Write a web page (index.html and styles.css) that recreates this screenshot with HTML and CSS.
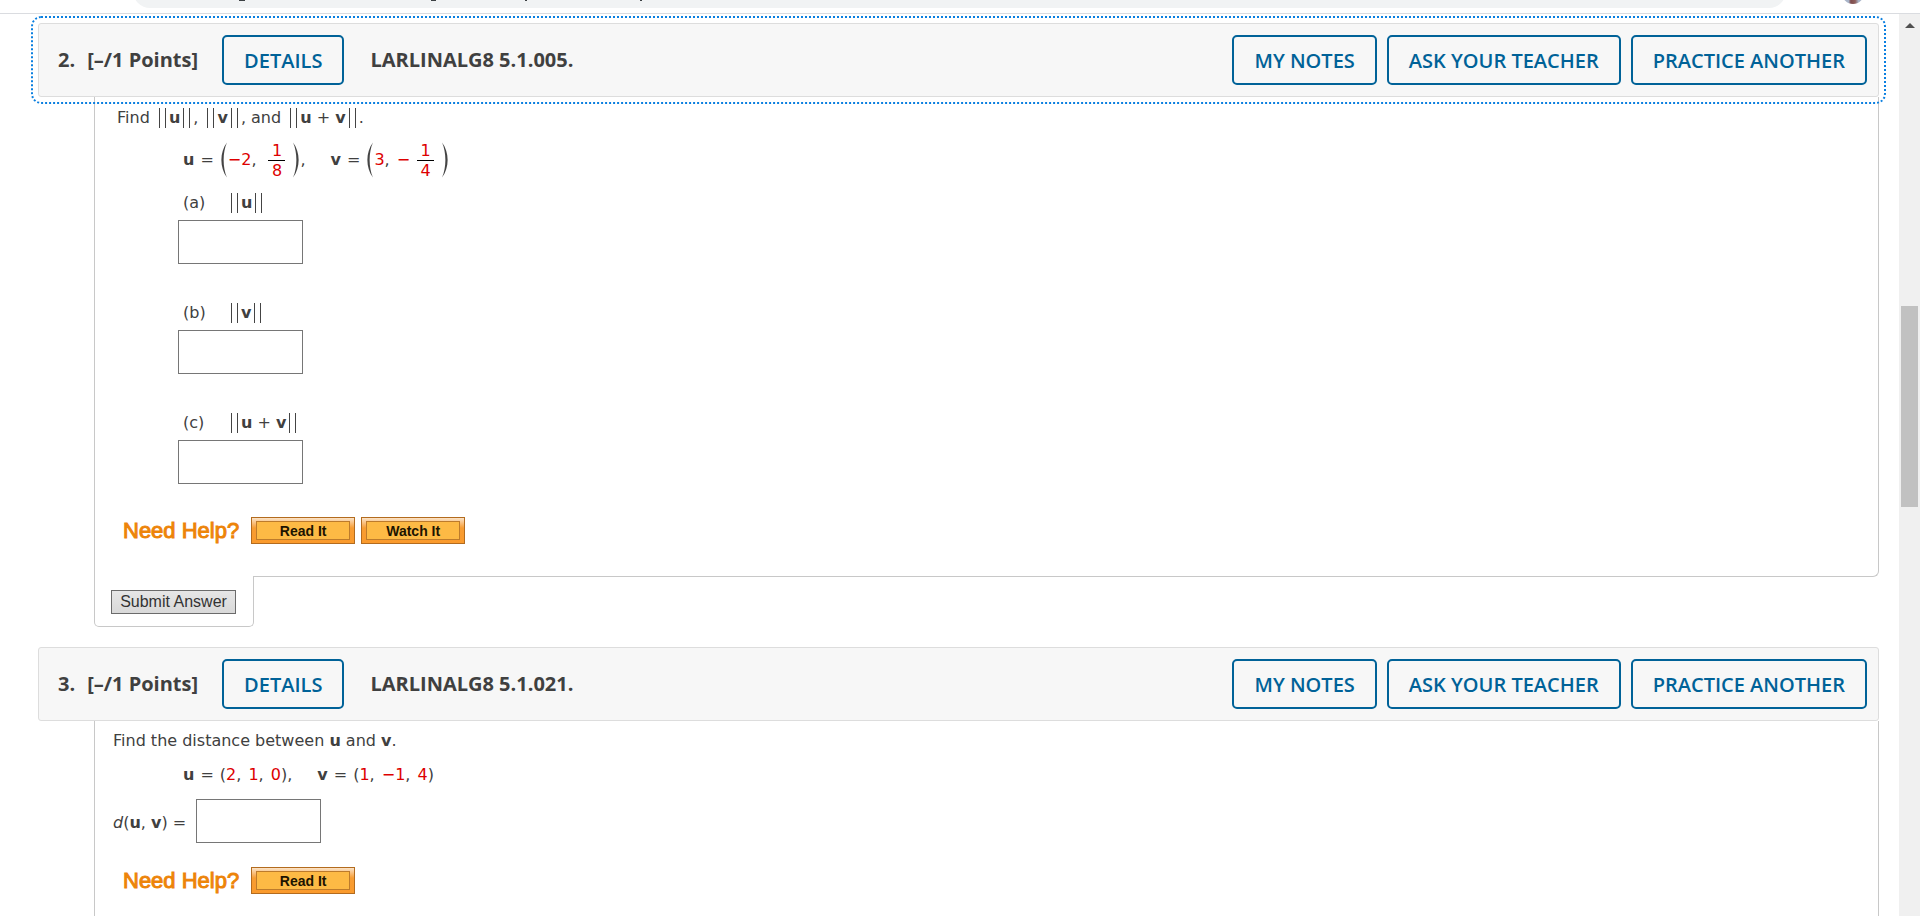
FILE: index.html
```html
<!DOCTYPE html>
<html lang="en">
<head>
  <meta charset="UTF-8" />
  <meta name="viewport" content="width=device-width, initial-scale=1" />
  <title>Assignment - Section 5.1</title>
  <link rel="stylesheet" href="styles.css">
</head>
<body>
  <div class="browser-bar">
    <div class="address">
      <svg class="marks" viewBox="0 0 520 1"><path d="M106 0h6v1h-6zM298 0h5v1h-5zM392 0h2v1h-2zM507 0h2v1h-2z" /></svg>
    </div>
    <div class="avatar"></div>
  </div>

  <div class="viewport">
    <main>
      <section class="question">
        <header class="question-header focused">
          <h2><span class="number">2.</span> <span class="points">[–/1 Points]</span></h2>
          <button class="btn details">DETAILS</button>
          <strong class="code">LARLINALG8 5.1.005.</strong>
          <div class="actions">
            <button class="btn">MY NOTES</button>
            <button class="btn">ASK YOUR TEACHER</button>
            <button class="btn">PRACTICE ANOTHER</button>
          </div>
        </header>

        <div class="question-body">
          <p class="prompt norms">Find <span class="norm"><b>u</b></span>, <span class="norm"><b>v</b></span>, and <span class="norm"><b>u</b> + <b>v</b></span>.</p>

          <div class="vectors tall">
            <b>u</b><span class="eq">=</span>
            <svg class="paren" viewBox="0 0 8 36"><path d="M7 0.5C-0.5 10 -0.5 26 7 35.5C2.5 26 2.5 10 7 0.5Z" /></svg>
            <span class="red">−2</span><span class="comma">,</span>
            <span class="fraction"><span>1</span><span>8</span></span>
            <svg class="paren" viewBox="0 0 8 36"><path d="M1 0.5C8.5 10 8.5 26 1 35.5C5.5 26 5.5 10 1 0.5Z" /></svg>
            <span class="separator">,</span>
            <b>v</b><span class="eq">=</span>
            <svg class="paren" viewBox="0 0 8 36"><path d="M7 0.5C-0.5 10 -0.5 26 7 35.5C2.5 26 2.5 10 7 0.5Z" /></svg>
            <span class="red">3</span><span class="comma">,</span>
            <span class="red minus">−</span>
            <span class="fraction"><span>1</span><span>4</span></span>
            <svg class="paren" viewBox="0 0 8 36"><path d="M1 0.5C8.5 10 8.5 26 1 35.5C5.5 26 5.5 10 1 0.5Z" /></svg>
          </div>

          <div class="part">
            <label for="part-a"><span class="letter">(a)</span><span class="norm"><b>u</b></span></label>
            <input type="text" class="answer" id="part-a">
          </div>
          <div class="part">
            <label for="part-b"><span class="letter">(b)</span><span class="norm"><b>v</b></span></label>
            <input type="text" class="answer" id="part-b">
          </div>
          <div class="part">
            <label for="part-c"><span class="letter">(c)</span><span class="norm"><b>u</b> + <b>v</b></span></label>
            <input type="text" class="answer" id="part-c">
          </div>

          <div class="help">
            <span class="help-title">Need Help?</span>
            <button class="help-btn"><span>Read It</span></button>
            <button class="help-btn"><span>Watch It</span></button>
          </div>
        </div>

        <div class="submit-tab">
          <button class="submit">Submit Answer</button>
        </div>
      </section>

      <section class="question">
        <header class="question-header">
          <h2><span class="number">3.</span> <span class="points">[–/1 Points]</span></h2>
          <button class="btn details">DETAILS</button>
          <strong class="code">LARLINALG8 5.1.021.</strong>
          <div class="actions">
            <button class="btn">MY NOTES</button>
            <button class="btn">ASK YOUR TEACHER</button>
            <button class="btn">PRACTICE ANOTHER</button>
          </div>
        </header>

        <div class="question-body">
          <p class="prompt">Find the distance between <b>u</b> and <b>v</b>.</p>
          <div class="vectors">
            <b>u</b><span class="eq">=</span>
            <span class="tuple">(<span class="red">2</span>, <span class="red">1</span>, <span class="red">0</span>)</span>
            <span class="separator">,</span>
            <b>v</b><span class="eq">=</span>
            <span class="tuple">(<span class="red">1</span>, <span class="red">−1</span>, <span class="red">4</span>)</span>
          </div>
          <div class="distance">
            <label for="distance"><i>d</i>(<b>u</b>, <b>v</b>) =</label>
            <input type="text" class="answer" id="distance">
          </div>
          <div class="help">
            <span class="help-title">Need Help?</span>
            <button class="help-btn"><span>Read It</span></button>
          </div>
        </div>
      </section>
    </main>

    <div class="scrollbar">
      <svg class="arrow" viewBox="0 0 10 5"><path d="M5 0L10 5H0Z" /></svg>
      <div class="thumb"></div>
    </div>
  </div>
</body>
</html>
```
FILE: styles.css
```css
* {
  box-sizing: border-box;
}

body {
  margin: 0;
  height: 100vh;
  display: flex;
  flex-direction: column;
  overflow: hidden;
  background: #fff;
  color: #404040;
  font-family: Verdana, "DejaVu Sans", sans-serif;
  font-size: 16px;
  line-height: 20px;
}

.browser-bar {
  flex: none;
  display: flex;
  align-items: flex-start;
  height: 14px;
  padding: 0 56px 0 133px;
  border-bottom: 1px solid #dadce0;
  overflow: hidden;
}

.address {
  flex: 1;
  height: 34px;
  margin-top: -26px;
  margin-right: 56px;
  background: #f1f3f4;
  border-radius: 17px;
}

.marks {
  display: block;
  width: 520px;
  height: 1px;
  margin-top: 26px;
  fill: #3c4043;
}

.avatar {
  width: 22px;
  height: 22px;
  margin-top: -18px;
  background: linear-gradient(90deg, #a9b4c8 30%, #7d4b4c 40%, #8d5f5c 60%, #a9b4c8 75%);
  border-radius: 50%;
}

.viewport {
  flex: 1;
  min-height: 0;
  display: flex;
}

main {
  flex: 1;
  padding: 9px 20px 0 38px;
  overflow: hidden;
}

.question {
  margin-bottom: 20px;
}

/* header */
.question-header {
  display: flex;
  align-items: center;
  height: 74px;
  padding: 0 11px 0 19px;
  background: #f7f7f7;
  border: 1px solid #ddd;
  border-radius: 3px;
  font-family: "Open Sans", sans-serif;
  font-size: 20px;
}

.question-header.focused {
  outline: 2px dotted #0a7fe0;
  outline-offset: 5px;
}

.question-header h2 {
  display: flex;
  gap: 12px;
  margin: 0;
  font-size: 20px;
  font-weight: 700;
}

.btn {
  height: 50px;
  padding: 0 20px;
  background: transparent;
  border: 2px solid #006298;
  border-radius: 5px;
  color: #006298;
  font-family: inherit;
  font-size: 20px;
  font-weight: 600;
  cursor: pointer;
}

.details {
  margin: 0 26px 0 24px;
}

.code {
  font-weight: 700;
}

.actions {
  display: flex;
  gap: 10px;
  margin-left: auto;
}

/* body */
.question-body {
  margin-left: 56px;
  padding: 10px 18px 32px;
  border: 1px solid #c8c8c8;
  border-top: none;
  border-radius: 0 0 6px 0;
}

.prompt {
  margin: 0;
}

.prompt.norms {
  padding: 1px 4px 0;
}

.norm {
  display: inline-block;
  padding: 0 3px;
  border: solid #444;
  border-width: 0 1px;
  position: relative;
  margin: 0 9px 0 10px;
}

.norm::before {
  content: "";
  position: absolute;
  inset: 0 -7px;
  border: solid #444;
  border-width: 0 1px;
}

.vectors {
  display: flex;
  align-items: center;
  margin: 14px 0 14px 70px;
}

.vectors.tall {
  margin: 10px 0 12px 70px;
}

.eq {
  margin: 0 6px;
}

.separator {
  margin-right: 25px;
}

.red {
  color: #d00;
}

.tuple .red:not(:first-child) {
  margin-left: 2px;
}

.comma {
  margin-right: 7px;
}

.minus {
  margin-right: 2px;
}

.paren {
  width: 8px;
  height: 36px;
  fill: #444;
}

.fraction {
  display: flex;
  flex-direction: column;
  margin: 4px 7px 0 5px;
  color: #d00;
  text-align: center;
  line-height: 18px;
}

.fraction span {
  width: 17px;
}

.fraction span:first-child {
  border-bottom: 1px solid #000;
}

.fraction span:last-child {
  line-height: 20px;
}

.part {
  display: flex;
  flex-direction: column;
  gap: 7px;
  margin-bottom: 39px;
  padding-left: 65px;
}

.part label {
  padding-left: 5px;
}

.letter {
  display: inline-block;
  min-width: 44px;
}

.answer {
  width: 125px;
  height: 44px;
  padding: 4px 8px;
  border: 1px solid #767676;
  font-family: inherit;
  font-size: 16px;
}

.distance {
  display: flex;
  align-items: center;
  gap: 10px;
  margin-bottom: 30px;
}

.distance label {
  padding-top: 3px;
}

.help {
  display: flex;
  align-items: center;
  gap: 6px;
  margin-top: -6px;
  padding-left: 10px;
  font-family: Arial, "Liberation Sans", sans-serif;
}

.help-title {
  margin-right: 6px;
  color: #ed8409;
  font-size: 22px;
  -webkit-text-stroke: 1px #ed8409;
}

.help-btn {
  width: 104px;
  height: 27px;
  padding: 3px 4px;
  background: linear-gradient(#fbe3c8, #f79d33 40%, #fa9a2c);
  border: 1px solid #b36b1e;
  color: #1c1400;
  font-family: inherit;
  font-size: 14px;
  font-weight: bold;
  cursor: pointer;
}

.help-btn span {
  display: block;
  padding-top: 2px;
  line-height: 15px;
  background: #fdba45;
  border: 1px solid #bd7b2b;
}

.submit-tab {
  width: 160px;
  margin: -1px 0 0 56px;
  padding: 14px 16px 12px;
  background: #fff;
  border: 1px solid #c8c8c8;
  border-top: none;
  border-radius: 0 0 5px 5px;
  position: relative;
}

.submit {
  display: block;
  width: 125px;
  height: 24px;
  padding: 0;
  background: linear-gradient(#e6e6e6, #d9d9d9);
  border: 1px solid #6b6b6b;
  color: #333;
  font-family: Arial, "Liberation Sans", sans-serif;
  font-size: 16px;
}

/* scrollbar */
.scrollbar {
  width: 21px;
  padding: 9px 2px 0;
  background: #f0f0f0;
}

.arrow {
  display: block;
  width: 10px;
  height: 5px;
  margin: 0 auto;
  fill: #505050;
}

.thumb {
  height: 201px;
  margin-top: 278px;
  background: #c1c1c1;
}
```
